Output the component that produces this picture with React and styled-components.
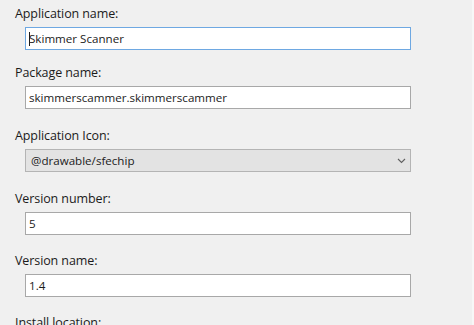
import React from 'react';
import styled, { createGlobalStyle } from 'styled-components';

const GlobalStyle = createGlobalStyle`
  html, body {
    margin: 0;
    padding: 0;
    background: #f0f0f0;
  }
  body {
    font-family: "Open Sans", "Noto Sans", "Liberation Sans", sans-serif;
    color: #1b1b1b;
  }
`;

const Page = styled.div`
  width: 474px;
  height: 325px;
  box-sizing: border-box;
  overflow: hidden;
  background: #f0f0f0;
  border-right: 2px solid #f7f7f7;
  padding: 5px 0 0 15px;
  display: flex;
  flex-direction: column;
`;

const Group = styled.div`
  display: flex;
  flex-direction: column;
  margin-bottom: ${props => props.gap || 19}px;
`;

const Label = styled.div`
  font-size: 12.5px;
  line-height: 17px;
  letter-spacing: -0.1px;
  margin-bottom: 5px;
`;

const Field = styled.div`
  box-sizing: border-box;
  width: 386px;
  height: 23px;
  margin-left: 10px;
  padding: 0 3px;
  display: flex;
  align-items: center;
  font-size: 11.6px;
  background: #ffffff;
  border: 1px solid ${props => (props.focused ? '#6ea8e2' : '#a8a8a8')};
`;

const Caret = styled.span`
  display: inline-block;
  width: 1px;
  height: 14px;
  margin-right: -1px;
  background: #1b1b1b;
`;

const Select = styled(Field)`
  background: #e3e3e3;
  border-color: #b4b4b4;
  justify-content: space-between;
  padding: 0 4px 0 5px;
`;

const Chevron = () => (
  <svg width="9" height="6" viewBox="0 0 9 6">
    <path d="M1 1 L4.5 4.5 L8 1" fill="none" stroke="#606060" strokeWidth="1.1" />
  </svg>
);

export default function App() {
  return (
    <>
      <GlobalStyle />
      <Page>
        <Group gap={14}>
          <Label>Application name:</Label>
          <Field focused>
            <Caret />
            Skimmer Scanner
          </Field>
        </Group>
        <Group gap={18}>
          <Label>Package name:</Label>
          <Field>skimmerscammer.skimmerscammer</Field>
        </Group>
        <Group gap={18}>
          <Label>Application Icon:</Label>
          <Select>
            @drawable/sfechip
            <Chevron />
          </Select>
        </Group>
        <Group gap={17}>
          <Label>Version number:</Label>
          <Field>5</Field>
        </Group>
        <Group gap={17}>
          <Label>Version name:</Label>
          <Field>1.4</Field>
        </Group>
        <Group>
          <Label>Install location:</Label>
        </Group>
      </Page>
    </>
  );
}
